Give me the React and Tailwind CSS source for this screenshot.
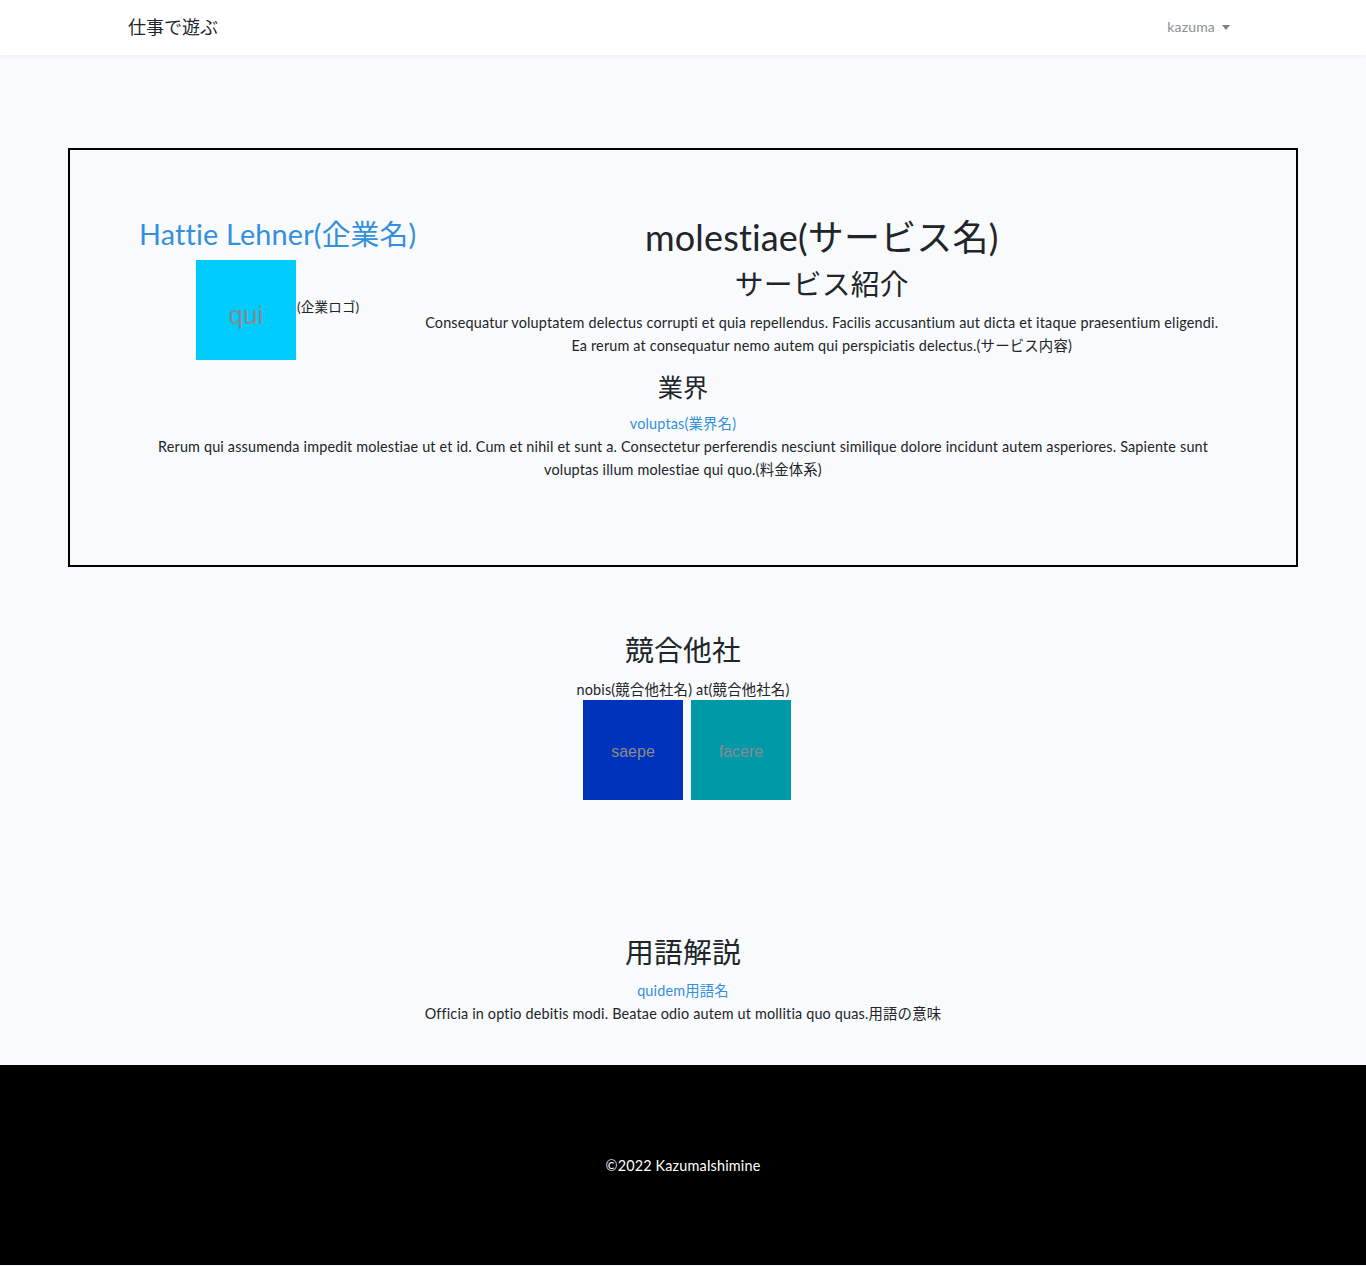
import React from 'react'

const font = { fontFamily: 'Lato, "Noto Sans CJK JP", sans-serif' }

function Placeholder({ bg, label, big }) {
  return (
    <div className={`w-[100px] h-[100px] flex items-center justify-center ${bg}`}>
      <span
        className={`text-[#8a8a8a] tracking-normal ${big ? 'text-[26px] translate-y-[6px]' : 'text-[16px] translate-y-[2px]'}`}
        style={{ fontFamily: '"Liberation Sans", sans-serif' }}
      >
        {label}
      </span>
    </div>
  )
}

export default function App() {
  return (
    <div className="min-h-screen bg-[#f8fafc] text-[#212529] text-[14.4px] leading-[1.6] tracking-[0.17px]" style={font}>
      <nav className="bg-white h-[55px] shadow-[0_2px_4px_rgba(0,0,0,0.04)]">
        <div className="max-w-[1140px] mx-auto px-[15px] h-full flex items-center justify-between">
          <a className="text-[18px] text-[#212529] -mt-[3px] tracking-normal" style={{ fontFamily: '"Noto Sans CJK JP", sans-serif' }}>仕事で遊ぶ</a>
          <div className="flex items-center gap-[7px] pr-[8px] text-[14px] text-[#8b8f93]">
            <span>kazuma</span>
            <span className="w-0 h-0 border-l-[4px] border-r-[4px] border-t-[5px] border-l-transparent border-r-transparent border-t-[#808080]" />
          </div>
        </div>
      </nav>

      <main className="pt-[93px]">
        <section className="mx-[68px] border-2 border-black px-[69px] pt-[65px] pb-[84px]">
          <div className="flex">
            <div className="shrink-0 flex flex-col items-center pt-[2px]">
              <h2 className="text-[28.8px] leading-[1.2] text-[#3490dc]">Hattie Lehner(企業名)</h2>
              <div className="flex items-center mt-[8px]">
                <Placeholder bg="bg-[#00ccff]" label="qui" big />
                <span className="text-[13.5px] ml-[1px] mb-[4px]">(企業ロゴ)</span>
              </div>
            </div>
            <div className="flex-1 text-center pt-[1px]">
              <h1 className="text-[36px] leading-[1.2]">molestiae(サービス名)</h1>
              <h2 className="text-[28.8px] leading-[1.2] mt-[8px]">サービス紹介</h2>
              <p className="mt-[9px] leading-[23px]">
                Consequatur voluptatem delectus corrupti et quia repellendus. Facilis accusantium aut dicta et itaque praesentium eligendi. Ea rerum at consequatur nemo autem qui perspiciatis delectus.(サービス内容)
              </p>
            </div>
          </div>
          <div className="text-center">
            <h3 className="text-[25.2px] leading-[1.2] mt-[12px]">業界</h3>
            <p className="text-[#3490dc] mt-[10px] leading-[23px]">voluptas(業界名)</p>
            <p className="leading-[23px]">
              Rerum qui assumenda impedit molestiae ut et id. Cum et nihil et sunt a. Consectetur perferendis nesciunt similique dolore incidunt autem asperiores. Sapiente sunt voluptas illum molestiae qui quo.(料金体系)
            </p>
          </div>
        </section>

        <section className="text-center pt-[66px]">
          <h2 className="text-[28.8px] leading-[1.2]">競合他社</h2>
          <p className="text-[14.4px] mt-[14px] leading-[1.2]">nobis(競合他社名) at(競合他社名)</p>
          <div className="flex justify-center gap-[8px] mt-[1px] pl-[8px]">
            <Placeholder bg="bg-[#0033bb]" label="saepe" />
            <Placeholder bg="bg-[#0099a8]" label="facere" />
          </div>
        </section>

        <section className="text-center pt-[135px] pb-[40px]">
          <h2 className="text-[28.8px] leading-[1.2]">用語解説</h2>
          <p className="text-[#3490dc] mt-[10px] leading-[23px]">quidem用語名</p>
          <p className="leading-[23px]">Officia in optio debitis modi. Beatae odio autem ut mollitia quo quas.用語の意味</p>
        </section>
      </main>

      <footer className="bg-black h-[200px] flex items-center justify-center text-white text-[14.4px]">
        ©2022 KazumaIshimine
      </footer>
    </div>
  )
}
